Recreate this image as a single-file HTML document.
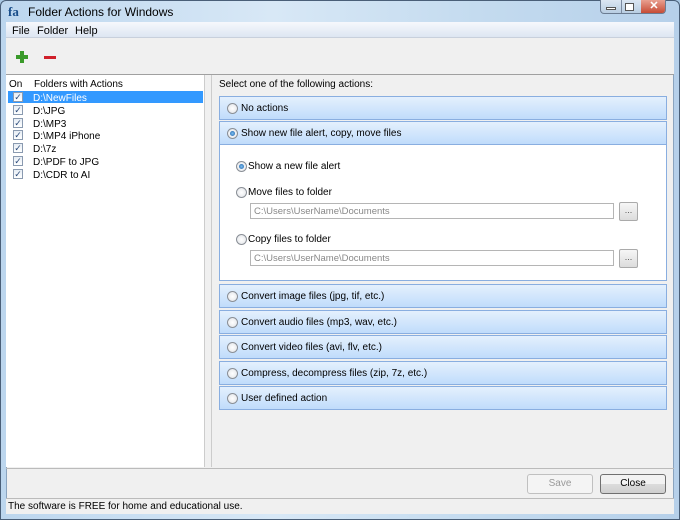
<!DOCTYPE html>
<html><head><style>
*{box-sizing:border-box;margin:0;padding:0}
body{width:680px;height:520px;overflow:hidden;font-family:"Liberation Sans",sans-serif;font-size:11px;color:#000;background:#a9c8e4;position:relative}
.abs{position:absolute}
.frame{left:0;top:0;width:680px;height:520px;background:linear-gradient(90deg,#bcd6ee,#d8e8f6 40%,#c4dbef 70%,#b6d0ea);border:1px solid #4a5f78;border-radius:6px 6px 0 0}
.title{left:28px;top:5px;font-size:12px;color:#000}
.client{left:6px;top:22px;width:668px;height:492px;background:#f0f0f0;border:1px solid #8ba4bf}
.menu{left:6px;top:22px;width:668px;height:16px;background:linear-gradient(#f6f8fc,#dde6f2);border-bottom:1px solid #c8d0dc}
.menu span{position:absolute;top:3px}
.tool{left:6px;top:38px;width:668px;height:37px;background:#f0f0f0;border-bottom:1px solid #a0a0a0}
.left{left:6px;top:75px;width:199px;height:392px;background:#fff;border-right:1px solid #ccc}
.split{left:205px;top:75px;width:7px;height:392px;background:#f0f0f0;border-right:1px solid #ccc}
.row{position:absolute;left:2px;width:195px;height:12px;font-size:10px}
.cb{position:absolute;left:5px;top:0;width:10px;height:10px;border:1px solid #8a9ab0;background:linear-gradient(#e6edf4,#fff);font-size:9px;line-height:8px;text-align:center;color:#2a4a7a}
.row .t{position:absolute;left:25px;top:1px}
.bar{position:absolute;left:219px;width:448px;height:24px;background:linear-gradient(#e4f0fd,#c0dcfb);border:1px solid #89aee0}
.bar .t{position:absolute;left:21px;top:6px;font-size:10px}
.rad{position:absolute;width:11px;height:11px;border-radius:50%;border:1px solid #8a8f96;background:radial-gradient(#fff,#dfe2e6)}
.rad.on::after{content:"";position:absolute;left:2px;top:2px;width:5px;height:5px;border-radius:50%;background:radial-gradient(#7ec0f0,#1a5da8)}
.bar .rad{left:7px;top:6px}
.panel{left:219px;top:145px;width:448px;height:136px;background:#fff;border:1px solid #89aee0;border-top:none}
.inp{position:absolute;left:30px;width:364px;height:16px;border:1px solid #b5b5b5;background:#fff;color:#888;font-size:9.5px;padding:2px 3px}
.dots{position:absolute;left:399px;width:19px;height:19px;border:1px solid #aaa;border-radius:2px;background:linear-gradient(#f6f6f6,#dcdcdc);font-size:9px;text-align:center;line-height:15px;color:#555}
.btn{position:absolute;top:474px;height:20px;width:66px;border:1px solid #707070;border-radius:3px;background:linear-gradient(#f2f2f2 50%,#dcdcdc 50%,#cfcfcf);text-align:center;line-height:18px;font-size:10px}
</style></head><body>
<div class="abs frame"></div>
<div class="abs" style="left:8px;top:4px;font-family:'Liberation Serif',serif;font-size:13px;color:#1a4e8a;font-weight:bold">fa</div>
<div class="abs title">Folder Actions for Windows</div>
<div class="abs" style="left:600px;top:0;width:66px;height:14px;border:1px solid #6b7c92;border-top:none;border-radius:0 0 4px 4px;background:linear-gradient(#dbe6f2,#b8cde2);overflow:hidden">
<div style="position:absolute;left:20px;top:0;width:1px;height:14px;background:#7b8aa0"></div>
<div style="position:absolute;left:5px;top:7px;width:10px;height:3px;border:1px solid #555;background:#fff"></div>
<div style="position:absolute;left:24px;top:3px;width:9px;height:8px;border:1px solid #555;background:#fff"></div>
<div style="position:absolute;left:40px;top:0;width:26px;height:14px;background:linear-gradient(#e8a090,#c4452e);color:#fff;font-size:11px;font-weight:bold;text-align:center;line-height:13px">✕</div>
</div>
<div class="abs client"></div>
<div class="abs menu"><span style="left:6px">File</span><span style="left:31px">Folder</span><span style="left:69px">Help</span></div>
<div class="abs tool">
<div class="abs" style="left:10px;top:17px;width:12px;height:4px;background:#3a9a2a"></div>
<div class="abs" style="left:14px;top:13px;width:4px;height:12px;background:#3a9a2a"></div>
<div class="abs" style="left:38px;top:18px;width:12px;height:3px;background:#d0202a"></div>
</div>
<div class="abs left">
<div class="abs" style="left:3px;top:4px;font-size:10px">On</div>
<div class="abs" style="left:28px;top:4px;font-size:10px">Folders with Actions</div>
<div class="abs" style="left:2px;top:16px;width:195px;height:12px;background:#3399ff"></div>
<div class="row" style="top:17px"><div class="cb">✓</div><span class="t" style="color:#fff">D:\NewFiles</span></div>
<div class="row" style="top:30px"><div class="cb">✓</div><span class="t">D:\JPG</span></div>
<div class="row" style="top:43px"><div class="cb">✓</div><span class="t">D:\MP3</span></div>
<div class="row" style="top:55px"><div class="cb">✓</div><span class="t">D:\MP4 iPhone</span></div>
<div class="row" style="top:68px"><div class="cb">✓</div><span class="t">D:\7z</span></div>
<div class="row" style="top:81px"><div class="cb">✓</div><span class="t">D:\PDF to JPG</span></div>
<div class="row" style="top:94px"><div class="cb">✓</div><span class="t">D:\CDR to AI</span></div>
</div>
<div class="abs split"></div>
<div class="abs" style="left:219px;top:79px;font-size:10px">Select one of the following actions:</div>
<div class="bar" style="top:96px"><div class="rad"></div><span class="t">No actions</span></div>
<div class="bar" style="top:121px"><div class="rad on"></div><span class="t">Show new file alert, copy, move files</span></div>
<div class="abs panel">
<div class="rad on" style="left:16px;top:16px"></div><div class="abs" style="left:28px;top:16px;font-size:10px">Show a new file alert</div>
<div class="rad" style="left:16px;top:42px"></div><div class="abs" style="left:28px;top:42px;font-size:10px">Move files to folder</div>
<div class="inp" style="top:58px">C:\Users\UserName\Documents</div><div class="dots" style="top:57px">...</div>
<div class="rad" style="left:16px;top:89px"></div><div class="abs" style="left:28px;top:89px;font-size:10px">Copy files to folder</div>
<div class="inp" style="top:105px">C:\Users\UserName\Documents</div><div class="dots" style="top:104px">...</div>
</div>
<div class="bar" style="top:284px"><div class="rad"></div><span class="t">Convert image files (jpg, tif, etc.)</span></div>
<div class="bar" style="top:310px"><div class="rad"></div><span class="t">Convert audio files (mp3, wav, etc.)</span></div>
<div class="bar" style="top:335px"><div class="rad"></div><span class="t">Convert video files (avi, flv, etc.)</span></div>
<div class="bar" style="top:361px"><div class="rad"></div><span class="t">Compress, decompress files (zip, 7z, etc.)</span></div>
<div class="bar" style="top:386px"><div class="rad"></div><span class="t">User defined action</span></div>
<div class="abs" style="left:6px;top:468px;width:668px;height:1px;background:#bbb"></div>
<div class="btn" style="left:527px;border-color:#c0c0c0;background:#f4f4f4;color:#999">Save</div>
<div class="btn" style="left:600px">Close</div>
<div class="abs" style="left:6px;top:498px;width:668px;height:16px;background:#f0f0f0;border-top:1px solid #bbb"></div>
<div class="abs" style="left:8px;top:501px;font-size:10px">The software is FREE for home and educational use.</div>
</body></html>
